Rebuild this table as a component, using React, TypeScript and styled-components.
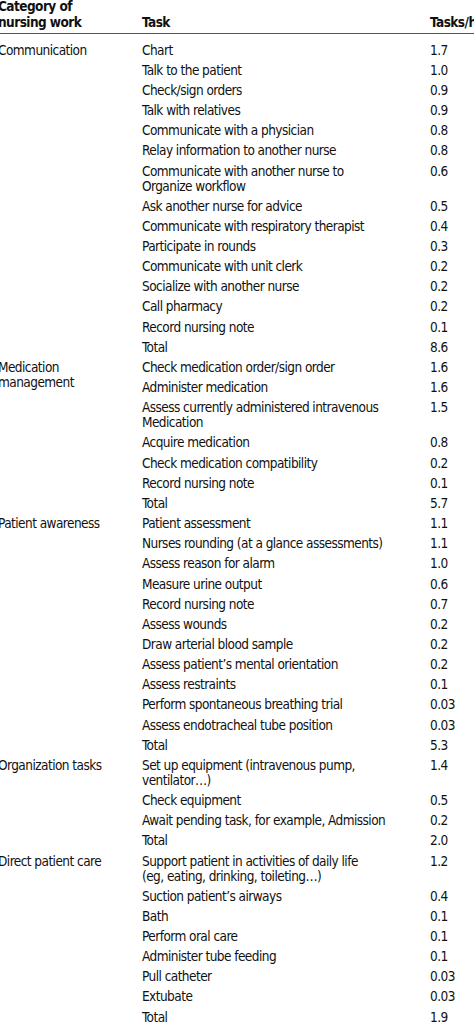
import React from 'react';
import styled, { createGlobalStyle } from 'styled-components';

const GlobalStyle = createGlobalStyle`
  html, body {
    margin: 0;
    padding: 0;
    background: #ffffff;
    overflow: hidden;
  }
`;

const Page = styled.div`
  width: 474px;
  height: 1027px;
  overflow: hidden;
  font-family: 'Liberation Sans Narrow', 'Arial Narrow', 'DejaVu Sans Condensed', 'Liberation Sans', sans-serif;
  font-size: 13.5px;
  letter-spacing: -0.55px;
  color: #111111;
`;

const Table = styled.table`
  border-collapse: collapse;
  table-layout: fixed;
  width: 500px;
  margin: -2px 0 0 -2px;
`;

const HeadCell = styled.th<{ $w: number }>`
  width: ${(p) => p.$w}px;
  text-align: left;
  vertical-align: bottom;
  font-weight: bold;
  line-height: 16px;
  padding: 0 0 3px 0;
  border-bottom: 1px solid #555;
  white-space: pre-line;
`;

const Cell = styled.td<{ $first?: boolean }>`
  text-align: left;
  vertical-align: top;
  line-height: 15px;
  padding: ${(p) => (p.$first ? '8.6px' : '2.58px')} 0 2.58px 0;
  white-space: pre-line;
`;

type Group = { category: string; tasks: [string, string][] };

const groups: Group[] = [
  {
    category: 'Communication',
    tasks: [
      ['Chart', '1.7'],
      ['Talk to the patient', '1.0'],
      ['Check/sign orders', '0.9'],
      ['Talk with relatives', '0.9'],
      ['Communicate with a physician', '0.8'],
      ['Relay information to another nurse', '0.8'],
      ['Communicate with another nurse to\nOrganize workflow', '0.6'],
      ['Ask another nurse for advice', '0.5'],
      ['Communicate with respiratory therapist', '0.4'],
      ['Participate in rounds', '0.3'],
      ['Communicate with unit clerk', '0.2'],
      ['Socialize with another nurse', '0.2'],
      ['Call pharmacy', '0.2'],
      ['Record nursing note', '0.1'],
      ['Total', '8.6'],
    ],
  },
  {
    category: 'Medication\nmanagement',
    tasks: [
      ['Check medication order/sign order', '1.6'],
      ['Administer medication', '1.6'],
      ['Assess currently administered intravenous\nMedication', '1.5'],
      ['Acquire medication', '0.8'],
      ['Check medication compatibility', '0.2'],
      ['Record nursing note', '0.1'],
      ['Total', '5.7'],
    ],
  },
  {
    category: 'Patient awareness',
    tasks: [
      ['Patient assessment', '1.1'],
      ['Nurses rounding (at a glance assessments)', '1.1'],
      ['Assess reason for alarm', '1.0'],
      ['Measure urine output', '0.6'],
      ['Record nursing note', '0.7'],
      ['Assess wounds', '0.2'],
      ['Draw arterial blood sample', '0.2'],
      ['Assess patient\u2019s mental orientation', '0.2'],
      ['Assess restraints', '0.1'],
      ['Perform spontaneous breathing trial', '0.03'],
      ['Assess endotracheal tube position', '0.03'],
      ['Total', '5.3'],
    ],
  },
  {
    category: 'Organization tasks',
    tasks: [
      ['Set up equipment (intravenous pump,\nventilator\u2026)', '1.4'],
      ['Check equipment', '0.5'],
      ['Await pending task, for example, Admission', '0.2'],
      ['Total', '2.0'],
    ],
  },
  {
    category: 'Direct patient care',
    tasks: [
      ['Support patient in activities of daily life\n(eg, eating, drinking, toileting\u2026)', '1.2'],
      ['Suction patient\u2019s airways', '0.4'],
      ['Bath', '0.1'],
      ['Perform oral care', '0.1'],
      ['Administer tube feeding', '0.1'],
      ['Pull catheter', '0.03'],
      ['Extubate', '0.03'],
      ['Total', '1.9'],
    ],
  },
];

export default function App() {
  return (
    <Page>
      <GlobalStyle />
      <Table>
        <thead>
          <tr>
            <HeadCell $w={144}>{'Category of\nnursing work'}</HeadCell>
            <HeadCell $w={288}>Task</HeadCell>
            <HeadCell $w={68}>Tasks/h</HeadCell>
          </tr>
        </thead>
        <tbody>
          {groups.map((g, gi) =>
            g.tasks.map(([task, rate], ti) => {
              const first = gi === 0 && ti === 0;
              return (
                <tr key={`${gi}-${ti}`}>
                  {ti === 0 && (
                    <Cell rowSpan={g.tasks.length} $first={first}>
                      {g.category}
                    </Cell>
                  )}
                  <Cell $first={first}>{task}</Cell>
                  <Cell $first={first}>{rate}</Cell>
                </tr>
              );
            })
          )}
        </tbody>
      </Table>
    </Page>
  );
}
